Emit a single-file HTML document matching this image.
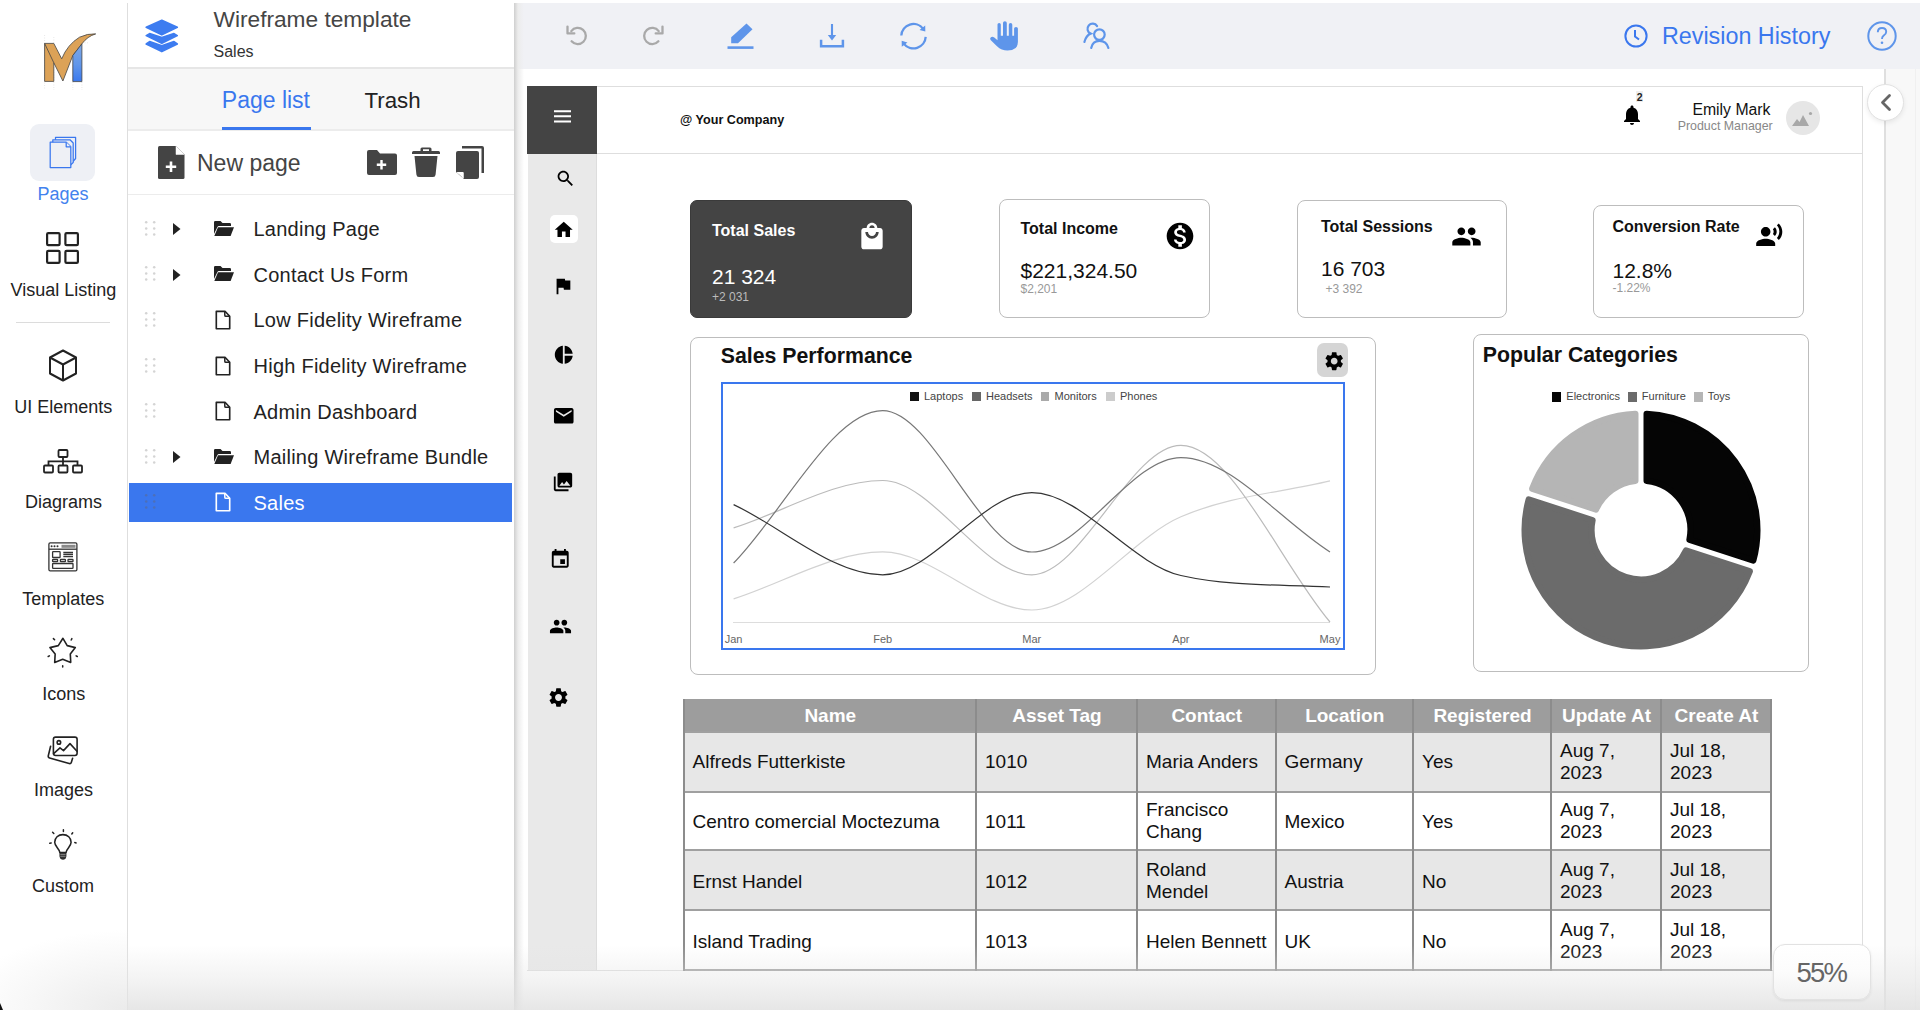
<!DOCTYPE html>
<html><head><meta charset="utf-8"><title>Wireframe</title>
<style>
html,body{margin:0;padding:0;width:1920px;height:1010px;overflow:hidden;background:#fff;}
body{position:relative;font-family:"Liberation Sans",sans-serif;}
.t{position:absolute;line-height:1;white-space:nowrap;}
svg{overflow:visible}
</style></head><body>
<div style="position:absolute;left:1885px;top:69px;width:35px;height:941px;background:#f8f8f8;"></div>
<div style="position:absolute;left:1884px;top:69px;width:2px;height:941px;background:#dfdfdf;"></div>
<div style="position:absolute;left:1915px;top:69px;width:1px;height:941px;background:#f0f0f0;"></div>
<div style="position:absolute;left:514px;top:69px;width:1370px;height:941px;background:#fff;"></div>
<div style="position:absolute;left:514px;top:3px;width:1406px;height:66px;background:#f0f1f5;"></div>
<div style="position:absolute;left:514px;top:3px;width:10px;height:1007px;background:linear-gradient(90deg,#cfcfcf 0,#ececec 40%,rgba(255,255,255,0) 100%);"></div>
<div style="position:absolute;left:127px;top:3px;width:1px;height:1007px;background:#dedede;"></div>
<div style="position:absolute;left:128px;top:68px;width:386px;height:62px;background:#f7f7f7;"></div>
<div style="position:absolute;left:128px;top:67px;width:386px;height:2px;background:#e6e6e6;"></div>
<div style="position:absolute;left:128px;top:129px;width:386px;height:2px;background:#ececec;"></div>
<div style="position:absolute;left:128px;top:194px;width:386px;height:1px;background:#ececec;"></div>
<div class="t" style="left:213.50px;top:8.00px;font-size:22.7px;color:#454545;">Wireframe template</div>
<div class="t" style="left:213.50px;top:44.00px;font-size:16px;color:#333;">Sales</div>
<div class="t" style="left:221.80px;top:89.00px;font-size:23px;color:#3a77ee;">Page list</div>
<div style="position:absolute;left:222px;top:127px;width:89px;height:3px;background:#3a77ee;"></div>
<div class="t" style="left:364.50px;top:90.00px;font-size:22.3px;color:#222;">Trash</div>
<div class="t" style="left:197.00px;top:152.00px;font-size:23px;color:#444;">New page</div>
<div style="position:absolute;left:129px;top:483px;width:383px;height:39px;background:#3a77ee;"></div>
<div class="t" style="left:253.50px;top:219.00px;font-size:20px;color:#222;letter-spacing:0.25px;">Landing Page</div>
<div class="t" style="left:253.50px;top:265.00px;font-size:20px;color:#222;letter-spacing:0.25px;">Contact Us Form</div>
<div class="t" style="left:253.50px;top:310.00px;font-size:20px;color:#222;letter-spacing:0.25px;">Low Fidelity Wireframe</div>
<div class="t" style="left:253.50px;top:356.00px;font-size:20px;color:#222;letter-spacing:0.25px;">High Fidelity Wireframe</div>
<div class="t" style="left:253.50px;top:402.00px;font-size:20px;color:#222;letter-spacing:0.25px;">Admin Dashboard</div>
<div class="t" style="left:253.50px;top:447.00px;font-size:20px;color:#222;letter-spacing:0.25px;">Mailing Wireframe Bundle</div>
<div class="t" style="left:253.50px;top:493.00px;font-size:20px;color:#fff;letter-spacing:0.25px;">Sales</div>
<svg style="position:absolute;left:145px;top:19px;" width="34" height="34" viewBox="0 0 34 34"><g fill="#3d7cf0" stroke="#3d7cf0" stroke-width="1.6" stroke-linejoin="round"><path d="M1.2 8.3 L16.8 1.2 L32.3 8.3 L16.8 15.9 Z"/><path d="M1.2 16.6 L4.6 14.6 L16.8 18.6 L29 14.6 L32.3 16.6 L16.8 24.2 Z"/><path d="M1.2 25 L4.6 22.6 L16.8 26.8 L29 22.6 L32.3 25 L16.8 32.6 Z"/></g></svg>
<svg style="position:absolute;left:158px;top:146px;" width="27" height="33" viewBox="0 0 27 33"><path d="M1.5 0 H18 L26.5 8.5 V31.5 Q26.5 33 25 33 H1.5 Q0 33 0 31.5 V1.5 Q0 0 1.5 0Z" fill="#444"/><path d="M18 0 V8.5 H26.5" fill="#fff" stroke="#fff" stroke-width="0.5"/><path d="M18.5 1.5 L25 8 H18.5Z" fill="#fff"/><path d="M13 15.5 V26 M7.8 20.8 H18.2" stroke="#fff" stroke-width="2.6"/></svg>
<svg style="position:absolute;left:367px;top:150px;" width="30" height="25" viewBox="0 0 30 25"><path d="M0 2 Q0 0 2 0 H10 L13 3.5 H28 Q30 3.5 30 5.5 V23 Q30 25 28 25 H2 Q0 25 0 23Z" fill="#444"/><path d="M14.5 10 V19.5 M9.8 14.8 H19.2" stroke="#fff" stroke-width="2.4"/></svg>
<svg style="position:absolute;left:412px;top:147px;" width="28" height="30" viewBox="0 0 28 30"><path d="M10 0.5 H18 Q19.5 0.5 19.5 2 V4 H26.5 Q28 4 28 5.5 V7 H0 V5.5 Q0 4 1.5 4 H8.5 V2 Q8.5 0.5 10 0.5Z M11 2.3 V4 H17 V2.3Z" fill="#444"/><path d="M2.5 9 H25.5 L23.6 27.5 Q23.4 30 21 30 H7 Q4.6 30 4.4 27.5Z" fill="#444"/></svg>
<svg style="position:absolute;left:456px;top:146px;" width="28" height="33" viewBox="0 0 28 33"><path d="M6 0 H26 Q28 0 28 2 V27 H25.5 V2.5 H6Z" fill="#444"/><path d="M0 7 Q0 5 2 5 H21 Q23 5 23 7 V31 Q23 33 21 33 H8 L0 26Z" fill="#444"/><path d="M0.5 26 H7.5 V32.5" fill="#fff"/><path d="M1 27 H7 V32" fill="none" stroke="#fff" stroke-width="1"/></svg>
<svg style="position:absolute;left:145px;top:221px;" width="11" height="14" viewBox="0 0 11 14"><circle cx="1.2" cy="1.2" r="1.25" fill="#d4d4d4"/><circle cx="9.2" cy="1.2" r="1.25" fill="#d4d4d4"/><circle cx="1.2" cy="7.4" r="1.25" fill="#d4d4d4"/><circle cx="9.2" cy="7.4" r="1.25" fill="#d4d4d4"/><circle cx="1.2" cy="13.6" r="1.25" fill="#d4d4d4"/><circle cx="9.2" cy="13.6" r="1.25" fill="#d4d4d4"/></svg>
<svg style="position:absolute;left:172.7px;top:223px;" width="8" height="12" viewBox="0 0 8 12"><path d="M0 0 L7.5 6 L0 12Z" fill="#222"/></svg>
<svg style="position:absolute;left:213.5px;top:221px;" width="20" height="15" viewBox="0 0 20 15"><path d="M0 1.2 Q0 0 1.2 0 H6.5 L8.5 2 H15.8 Q17 2 17 3.2 V5 H5 Q3.8 5 3.3 6.2 L0 13Z" fill="#222"/><path d="M4 6.3 H20 L16.6 15 H0.3Z" fill="#222"/></svg>
<svg style="position:absolute;left:145px;top:266px;" width="11" height="14" viewBox="0 0 11 14"><circle cx="1.2" cy="1.2" r="1.25" fill="#d4d4d4"/><circle cx="9.2" cy="1.2" r="1.25" fill="#d4d4d4"/><circle cx="1.2" cy="7.4" r="1.25" fill="#d4d4d4"/><circle cx="9.2" cy="7.4" r="1.25" fill="#d4d4d4"/><circle cx="1.2" cy="13.6" r="1.25" fill="#d4d4d4"/><circle cx="9.2" cy="13.6" r="1.25" fill="#d4d4d4"/></svg>
<svg style="position:absolute;left:172.7px;top:269px;" width="8" height="12" viewBox="0 0 8 12"><path d="M0 0 L7.5 6 L0 12Z" fill="#222"/></svg>
<svg style="position:absolute;left:213.5px;top:266px;" width="20" height="15" viewBox="0 0 20 15"><path d="M0 1.2 Q0 0 1.2 0 H6.5 L8.5 2 H15.8 Q17 2 17 3.2 V5 H5 Q3.8 5 3.3 6.2 L0 13Z" fill="#222"/><path d="M4 6.3 H20 L16.6 15 H0.3Z" fill="#222"/></svg>
<svg style="position:absolute;left:145px;top:312px;" width="11" height="14" viewBox="0 0 11 14"><circle cx="1.2" cy="1.2" r="1.25" fill="#d4d4d4"/><circle cx="9.2" cy="1.2" r="1.25" fill="#d4d4d4"/><circle cx="1.2" cy="7.4" r="1.25" fill="#d4d4d4"/><circle cx="9.2" cy="7.4" r="1.25" fill="#d4d4d4"/><circle cx="1.2" cy="13.6" r="1.25" fill="#d4d4d4"/><circle cx="9.2" cy="13.6" r="1.25" fill="#d4d4d4"/></svg>
<svg style="position:absolute;left:215.3px;top:310px;" width="16" height="20" viewBox="0 0 16 20"><path d="M1.3 1.3 H10 L14.7 6.3 V18.7 H1.3Z" fill="none" stroke="#222" stroke-width="1.65" stroke-linejoin="round"/><path d="M9.8 1.3 V5.2 Q9.8 6.3 10.9 6.3 H14.7" fill="none" stroke="#222" stroke-width="1.5"/></svg>
<svg style="position:absolute;left:145px;top:358px;" width="11" height="14" viewBox="0 0 11 14"><circle cx="1.2" cy="1.2" r="1.25" fill="#d4d4d4"/><circle cx="9.2" cy="1.2" r="1.25" fill="#d4d4d4"/><circle cx="1.2" cy="7.4" r="1.25" fill="#d4d4d4"/><circle cx="9.2" cy="7.4" r="1.25" fill="#d4d4d4"/><circle cx="1.2" cy="13.6" r="1.25" fill="#d4d4d4"/><circle cx="9.2" cy="13.6" r="1.25" fill="#d4d4d4"/></svg>
<svg style="position:absolute;left:215.3px;top:356px;" width="16" height="20" viewBox="0 0 16 20"><path d="M1.3 1.3 H10 L14.7 6.3 V18.7 H1.3Z" fill="none" stroke="#222" stroke-width="1.65" stroke-linejoin="round"/><path d="M9.8 1.3 V5.2 Q9.8 6.3 10.9 6.3 H14.7" fill="none" stroke="#222" stroke-width="1.5"/></svg>
<svg style="position:absolute;left:145px;top:403px;" width="11" height="14" viewBox="0 0 11 14"><circle cx="1.2" cy="1.2" r="1.25" fill="#d4d4d4"/><circle cx="9.2" cy="1.2" r="1.25" fill="#d4d4d4"/><circle cx="1.2" cy="7.4" r="1.25" fill="#d4d4d4"/><circle cx="9.2" cy="7.4" r="1.25" fill="#d4d4d4"/><circle cx="1.2" cy="13.6" r="1.25" fill="#d4d4d4"/><circle cx="9.2" cy="13.6" r="1.25" fill="#d4d4d4"/></svg>
<svg style="position:absolute;left:215.3px;top:401px;" width="16" height="20" viewBox="0 0 16 20"><path d="M1.3 1.3 H10 L14.7 6.3 V18.7 H1.3Z" fill="none" stroke="#222" stroke-width="1.65" stroke-linejoin="round"/><path d="M9.8 1.3 V5.2 Q9.8 6.3 10.9 6.3 H14.7" fill="none" stroke="#222" stroke-width="1.5"/></svg>
<svg style="position:absolute;left:145px;top:449px;" width="11" height="14" viewBox="0 0 11 14"><circle cx="1.2" cy="1.2" r="1.25" fill="#d4d4d4"/><circle cx="9.2" cy="1.2" r="1.25" fill="#d4d4d4"/><circle cx="1.2" cy="7.4" r="1.25" fill="#d4d4d4"/><circle cx="9.2" cy="7.4" r="1.25" fill="#d4d4d4"/><circle cx="1.2" cy="13.6" r="1.25" fill="#d4d4d4"/><circle cx="9.2" cy="13.6" r="1.25" fill="#d4d4d4"/></svg>
<svg style="position:absolute;left:172.7px;top:451px;" width="8" height="12" viewBox="0 0 8 12"><path d="M0 0 L7.5 6 L0 12Z" fill="#222"/></svg>
<svg style="position:absolute;left:213.5px;top:449px;" width="20" height="15" viewBox="0 0 20 15"><path d="M0 1.2 Q0 0 1.2 0 H6.5 L8.5 2 H15.8 Q17 2 17 3.2 V5 H5 Q3.8 5 3.3 6.2 L0 13Z" fill="#222"/><path d="M4 6.3 H20 L16.6 15 H0.3Z" fill="#222"/></svg>
<svg style="position:absolute;left:145px;top:494px;" width="11" height="14" viewBox="0 0 11 14"><circle cx="1.2" cy="1.2" r="1.25" fill="#4d6fb8"/><circle cx="9.2" cy="1.2" r="1.25" fill="#4d6fb8"/><circle cx="1.2" cy="7.4" r="1.25" fill="#4d6fb8"/><circle cx="9.2" cy="7.4" r="1.25" fill="#4d6fb8"/><circle cx="1.2" cy="13.6" r="1.25" fill="#4d6fb8"/><circle cx="9.2" cy="13.6" r="1.25" fill="#4d6fb8"/></svg>
<svg style="position:absolute;left:215.3px;top:492px;" width="16" height="20" viewBox="0 0 16 20"><path d="M1.3 1.3 H10 L14.7 6.3 V18.7 H1.3Z" fill="none" stroke="#fff" stroke-width="1.65" stroke-linejoin="round"/><path d="M9.8 1.3 V5.2 Q9.8 6.3 10.9 6.3 H14.7" fill="none" stroke="#fff" stroke-width="1.5"/></svg>
<svg style="position:absolute;left:30px;top:20px;" width="80" height="80" viewBox="30 20 80 80"><defs><linearGradient id="lg1" x1="0" y1="0" x2="0" y2="1"><stop offset="0" stop-color="#7ea8e6"/><stop offset="0.55" stop-color="#6096ea"/><stop offset="1" stop-color="#3a78ee"/></linearGradient></defs><g stroke="#d0d0d0" stroke-width="0.5" stroke-dasharray="1 1.5" fill="none"><path d="M44.6 35 V90 M53.8 37 V90 M72.8 82 V90 M81.9 82 V90 M82 42.8 H89"/></g><path d="M44.6 43.4 H53.8 L61.7 58.8 Q67.5 44.5 79.5 37.2 Q87.5 33.4 95.7 33.9 Q87.5 36.3 81.9 43.8 L72.8 55.5 L62.9 81 L53.8 62.8 V81.4 H44.6 Z" fill="#dca257" stroke="#444" stroke-width="0.8" stroke-linejoin="round"/><path d="M44.6 43.4 L53.8 62.8" stroke="#444" stroke-width="0.8"/><path d="M72.8 55.5 L81.9 43.8 V81.6 H72.8 Z" fill="url(#lg1)" stroke="#444" stroke-width="0.8" stroke-linejoin="round"/></svg>
<div style="position:absolute;left:30px;top:124px;width:65px;height:57px;background:#eef0f5;border-radius:9px;"></div>
<svg style="position:absolute;left:25px;top:115px;" width="80" height="80" viewBox="25 115 80 80"><g fill="#eef0f5" stroke="#3a77ee" stroke-width="1.25" stroke-linejoin="round"><path d="M55.5 137.3 H75.6 V158.5 L73 161.5 H55.5Z"/><path d="M52.8 139.8 H70 L73.2 143 V162.5 L70.5 165 H52.8Z"/><path d="M50.2 142.2 H66.2 L70.8 146.8 V167.5 H50.2Z"/><path d="M66.2 142.2 V146.8 H70.8"/></g></svg>
<div class="t" style="left:37.50px;top:185.00px;font-size:18px;color:#4282ee;">Pages</div>
<svg style="position:absolute;left:46px;top:232px;" width="33" height="32" viewBox="0 0 33 32"><g fill="none" stroke="#222" stroke-width="2.2"><rect x="1.1" y="1.1" width="12.5" height="12" rx="1.2"/><rect x="19.4" y="1.1" width="12.5" height="12" rx="1.2"/><rect x="1.1" y="18.9" width="12.5" height="12" rx="1.2"/><rect x="19.4" y="18.9" width="12.5" height="12" rx="1.2"/></g></svg>
<div class="t" style="left:10.50px;top:281.00px;font-size:18px;color:#222;">Visual Listing</div>
<div style="position:absolute;left:16px;top:322px;width:94px;height:1px;background:#dcdcdc;"></div>
<svg style="position:absolute;left:48px;top:349px;" width="30" height="33" viewBox="0 0 30 33"><g fill="none" stroke="#222" stroke-width="2" stroke-linejoin="round"><path d="M15 1.5 L28 8.5 V24.5 L15 31.5 L2 24.5 V8.5Z"/><path d="M2 8.5 L15 15.5 L28 8.5 M15 15.5 V31.5"/></g></svg>
<div class="t" style="left:14.30px;top:398.00px;font-size:18px;color:#222;">UI Elements</div>
<svg style="position:absolute;left:43px;top:449px;" width="40" height="25" viewBox="0 0 40 25"><g fill="none" stroke="#222" stroke-width="1.8"><rect x="15.5" y="1" width="9" height="7" rx="1"/><rect x="1" y="16.5" width="9" height="7" rx="1"/><rect x="15.5" y="16.5" width="9" height="7" rx="1"/><rect x="30" y="16.5" width="9" height="7" rx="1"/><path d="M20 8 V16.5 M5.5 16.5 V12.3 H34.5 V16.5"/></g></svg>
<div class="t" style="left:25.00px;top:493.00px;font-size:18px;color:#222;">Diagrams</div>
<svg style="position:absolute;left:42px;top:535px;" width="42" height="42" viewBox="42 535 42 42"><g fill="none" stroke="#333" stroke-width="1.3" stroke-linejoin="round"><rect x="48.9" y="542.9" width="28" height="28" rx="1.3"/><path d="M48.9 549.2 H76.9"/><rect x="52.6" y="551.7" width="7.5" height="5.8" rx="0.6"/><path d="M63.3 552.5 H73 M63.3 554.5 H73 M63.3 556.6 H73"/><rect x="52.6" y="559.5" width="5" height="2.2" rx="0.5"/><rect x="60.4" y="559.5" width="5" height="2.2" rx="0.5"/><rect x="68" y="559.5" width="5" height="2.2" rx="0.5"/><rect x="52.6" y="563.5" width="20.4" height="4.8" rx="0.6"/></g><rect x="61.5" y="544.8" width="14" height="3" fill="#8a8a8a"/><g fill="#333"><circle cx="51.6" cy="546.3" r="1"/><circle cx="54.5" cy="546.3" r="1"/><circle cx="57.5" cy="546.3" r="1"/></g></svg>
<div class="t" style="left:22.30px;top:590.00px;font-size:18px;color:#222;">Templates</div>
<svg style="position:absolute;left:40px;top:630px;" width="48" height="45" viewBox="40 630 48 45"><path d="M62.95 638.3 L67.2 645.6 L75.3 647.6 L70.3 654.1 L70.75 662.4 L62.7 659.2 L54.7 662.4 L55.15 654.1 L49.9 647.6 L58.3 645.6Z" fill="none" stroke="#222" stroke-width="1.6" stroke-linejoin="round"/><g stroke="#222" stroke-width="1.5" stroke-linecap="round"><path d="M53.4 638.6 L54.6 639.8 M71.9 638.6 L71.2 640 M48.2 656.5 L49.4 655.8 M77.3 656.5 L76.1 655.8 M62.7 665.7 V666.9"/></g></svg>
<div class="t" style="left:42.20px;top:685.00px;font-size:18px;color:#222;">Icons</div>
<svg style="position:absolute;left:47px;top:735px;" width="32" height="30" viewBox="0 0 32 30"><g fill="none" stroke="#222" stroke-width="1.6" stroke-linejoin="round" stroke-linecap="round"><rect x="6.4" y="2.1" width="23.7" height="18.4" rx="2.2"/><path d="M6.6 18.6 L13 12.9 L16.5 15.6 L23 8.6 L30 16.3"/><circle cx="11.9" cy="7.4" r="1.75"/><path d="M3.6 11.2 L1.3 20.8 Q0.9 22.5 2.6 23 L22.2 28.5 Q23.8 28.9 24.3 27.4 L25.6 23.2"/></g></svg>
<div class="t" style="left:34.00px;top:781.00px;font-size:18px;color:#222;">Images</div>
<svg style="position:absolute;left:49px;top:829px;" width="29" height="31" viewBox="0 0 29 31"><path d="M10.8 23.4 C10.4 19.5 5.7 17.5 5.7 13.3 C5.7 8.9 9.2 5.6 13.9 5.6 C18.6 5.6 22.1 8.9 22.1 13.3 C22.1 17.5 17.5 19.5 17.1 23.4 Z" fill="none" stroke="#222" stroke-width="1.55" stroke-linejoin="round"/><path d="M10.9 23.6 H17 V27.2 Q17 30.3 14 30.3 Q10.9 30.3 10.9 27.2Z" fill="#333" stroke="#222" stroke-width="0.8"/><path d="M11.3 25.4 H16.6 M11.3 27.3 H16.6" stroke="#bbb" stroke-width="0.6"/><g stroke="#222" stroke-width="1.5" stroke-linecap="round"><path d="M14.4 0.8 V2.4 M3.6 3.3 L4.8 4.5 M23.7 3.8 L22.8 5 M0.8 14.3 L2.2 14 M25.8 13.6 L27.1 13.9"/></g></svg>
<div class="t" style="left:32.00px;top:877.00px;font-size:18px;color:#222;">Custom</div>
<svg style="position:absolute;left:565px;top:24px;" width="24" height="23" viewBox="0 0 24 23"><path d="M6.3 7.1 A8.1 8.1 0 1 1 6.6 17.3" fill="none" stroke="#a9a9a9" stroke-width="2.3" stroke-linecap="round"/><path d="M2.5 2.6 V9.4 H9.3" fill="none" stroke="#a9a9a9" stroke-width="2.3" stroke-linecap="round" stroke-linejoin="round"/></svg>
<svg style="position:absolute;left:641px;top:24px;" width="24" height="23" viewBox="0 0 24 23"><path d="M17.7 7.1 A8.1 8.1 0 1 0 17.4 17.3" fill="none" stroke="#a9a9a9" stroke-width="2.3" stroke-linecap="round"/><path d="M21.5 2.6 V9.4 H14.7" fill="none" stroke="#a9a9a9" stroke-width="2.3" stroke-linecap="round" stroke-linejoin="round"/></svg>
<svg style="position:absolute;left:727px;top:23px;" width="27" height="26" viewBox="0 0 27 26"><path d="M19.5 0.5 L25.5 6.2 L11 20.2 H4.2 L4.2 14.2Z" fill="#5e95ea"/><rect x="0.5" y="23.3" width="26" height="2.6" fill="#5e95ea"/></svg>
<svg style="position:absolute;left:819px;top:24px;" width="26" height="24" viewBox="0 0 26 24"><path d="M13 0 V12" stroke="#5e95ea" stroke-width="2.1"/><path d="M8.8 11 H17.2 L13 16.6Z" fill="#5e95ea"/><path d="M2.1 15.8 V22.3 H23.9 V15.8" fill="none" stroke="#5e95ea" stroke-width="2.5"/></svg>
<svg style="position:absolute;left:893px;top:16px;" width="40" height="40" viewBox="893 16 40 40"><path d="M901.32 35.56 A12.2 12.2 0 0 1 923.11 28.69" fill="none" stroke="#5e95ea" stroke-width="2.3"/><path d="M925.68 36.84 A12.2 12.2 0 0 1 903.89 43.71" fill="none" stroke="#5e95ea" stroke-width="2.3"/><path d="M925.33 31.53 L925.21 25.53 L919.54 29.96Z M901.67 40.87 L901.79 46.87 L907.46 42.44Z" fill="#5e95ea"/></svg>
<svg style="position:absolute;left:985px;top:16px;" width="40" height="40" viewBox="985 16 40 40"><path d="M997.5 24.6 Q997.5 23 999.15 23 Q1000.8 23 1000.8 24.6 V35.8 H1003 V22.9 Q1003 21.2 1004.9 21.2 Q1006.8 21.2 1006.8 22.9 V35.8 H1008.8 V24.7 Q1008.8 23 1010.55 23 Q1012.3 23 1012.3 24.7 V35.8 H1014.1 V28.6 Q1014.1 26.9 1016 26.9 Q1017.9 26.9 1017.9 28.6 V42 Q1017.9 50.6 1007.5 50.6 Q1001.5 50.6 997 46.2 L990.6 39.9 Q989.5 38.4 990.9 37.3 Q992.4 36.3 994.3 37.6 L997.5 40.3 Z" fill="#5e95ea"/></svg>
<svg style="position:absolute;left:1083px;top:22px;" width="27" height="27" viewBox="0 0 27 27"><g fill="none" stroke="#5e95ea" stroke-width="2.2" stroke-linecap="round"><circle cx="16.4" cy="12.6" r="5.3"/><path d="M8.2 26 Q9.7 18.9 16.4 18.9 Q23.5 18.9 25.4 26"/><path d="M14.1 4.1 A5.2 5.2 0 1 0 7.6 11.6 Q3.2 13.3 1.4 20"/></g></svg>
<svg style="position:absolute;left:1624px;top:24px;" width="24" height="24" viewBox="0 0 24 24"><circle cx="12" cy="12" r="10.6" fill="none" stroke="#3a77ee" stroke-width="2"/><path d="M11 6 V12.5 L15 15.5" fill="none" stroke="#3a77ee" stroke-width="2"/></svg>
<div class="t" style="left:1662.00px;top:25.00px;font-size:23.3px;color:#3a77ee;">Revision History</div>
<svg style="position:absolute;left:1867px;top:21px;" width="30" height="30" viewBox="0 0 30 30"><circle cx="15" cy="15" r="13.7" fill="none" stroke="#5e95ea" stroke-width="2"/><path d="M10.8 11.3 Q10.8 7 15 7 Q19.2 7 19.2 10.8 Q19.2 13.2 16.6 14.6 Q15 15.5 15 18" fill="none" stroke="#5e95ea" stroke-width="1.9"/><circle cx="15" cy="21.8" r="1.3" fill="#5e95ea"/></svg>
<div style="position:absolute;left:527px;top:86px;width:1336px;height:1px;background:#dedede;"></div>
<div style="position:absolute;left:1862px;top:86px;width:1px;height:885px;background:#dedede;"></div>
<div style="position:absolute;left:597px;top:153px;width:1265px;height:1px;background:#dedede;"></div>
<div style="position:absolute;left:527px;top:970px;width:1336px;height:1px;background:#dedede;"></div>
<div style="position:absolute;left:527px;top:86px;width:70px;height:68px;background:#444;"></div>
<svg style="position:absolute;left:554px;top:110px;" width="17" height="13" viewBox="0 0 17 13"><path d="M0 1.2 H17 M0 6.3 H17 M0 11.4 H17" stroke="#fff" stroke-width="2"/></svg>
<div style="position:absolute;left:528px;top:154px;width:69px;height:816px;background:#e9e9e9;"></div>
<div style="position:absolute;left:596px;top:154px;width:1px;height:816px;background:#dddddd;"></div>
<div style="position:absolute;left:550px;top:215px;width:28px;height:28px;background:#fff;border-radius:5px;"></div>
<svg style="position:absolute;left:554.8px;top:168.4px;" width="21" height="21" viewBox="0 0 24 24"><path d="M15.5 14h-.79l-.28-.27C15.41 12.59 16 11.11 16 9.5 16 5.91 13.09 3 9.5 3S3 5.91 3 9.5 5.91 16 9.5 16c1.61 0 3.09-.59 4.23-1.57l.27.28v.79l5 4.99L20.49 19l-4.99-5zm-6 0C7.01 14 5 11.99 5 9.5S7.01 5 9.5 5 14 7.01 14 9.5 11.99 14 9.5 14z" fill="#000"/></svg>
<svg style="position:absolute;left:552.9px;top:219.1px;" width="21.5" height="21.5" viewBox="0 0 24 24"><path d="M10 20v-6h4v6h5v-8h3L12 3 2 12h3v8z" fill="#000"/></svg>
<svg style="position:absolute;left:551.6px;top:275.2px;" width="22" height="22" viewBox="0 0 24 24"><path d="M14.4 6L14 4H5v17h2v-7h5.6l.4 2h7V6z" fill="#000"/></svg>
<svg style="position:absolute;left:552.9px;top:344px;" width="21.5" height="21.5" viewBox="0 0 24 24"><path d="M11 2v20c-5.07-.5-9-4.79-9-10s3.93-9.5 9-10zm2.03 0v8.99H22c-.47-4.74-4.24-8.52-8.97-8.99zm0 11.01V22c4.74-.47 8.5-4.25 8.97-8.99h-8.97z" fill="#000"/></svg>
<svg style="position:absolute;left:552px;top:404.2px;" width="23.5" height="23.5" viewBox="0 0 24 24"><path d="M20 4H4c-1.1 0-1.99.9-1.99 2L2 18c0 1.1.9 2 2 2h16c1.1 0 2-.9 2-2V6c0-1.1-.9-2-2-2zm0 4l-8 5-8-5V6l8 5 8-5v2z" fill="#000"/></svg>
<svg style="position:absolute;left:551.5px;top:471.2px;" width="22" height="22" viewBox="0 0 24 24"><path d="M22 16V4c0-1.1-.9-2-2-2H8c-1.1 0-2 .9-2 2v12c0 1.1.9 2 2 2h12c1.1 0 2-.9 2-2zm-11-4l2.03 2.71L16 11l4 5H8l3-4zM2 6v14c0 1.1.9 2 2 2h14v-2H4V6H2z" fill="#000"/></svg>
<svg style="position:absolute;left:549.2px;top:547.8px;" width="22.5" height="22.5" viewBox="0 0 24 24"><path d="M17 12h-5v5h5v-5zM16 1v2H8V1H6v2H5c-1.11 0-1.99.9-1.99 2L3 19c0 1.1.89 2 2 2h14c1.1 0 2-.9 2-2V5c0-1.1-.9-2-2-2h-1V1h-2zm3 18H5V8h14v11z" fill="#000"/></svg>
<svg style="position:absolute;left:549px;top:615.2px;" width="23" height="23" viewBox="0 0 24 24"><path d="M16 11c1.66 0 2.99-1.34 2.99-3S17.66 5 16 5c-1.66 0-3 1.34-3 3s1.34 3 3 3zm-8 0c1.66 0 2.99-1.34 2.99-3S9.66 5 8 5C6.34 5 5 6.34 5 8s1.34 3 3 3zm0 2c-2.33 0-7 1.17-7 3.5V19h14v-2.5c0-2.33-4.67-3.5-7-3.5zm8 0c-.29 0-.62.02-.97.05 1.16.84 1.97 1.97 1.97 3.45V19h6v-2.5c0-2.33-4.67-3.5-7-3.5z" fill="#000"/></svg>
<svg style="position:absolute;left:547.4px;top:686.1px;" width="23" height="23" viewBox="0 0 24 24"><path d="M19.14 12.94c.04-.3.06-.61.06-.94 0-.32-.02-.64-.07-.94l2.03-1.58c.18-.14.23-.41.12-.61l-1.92-3.32c-.12-.22-.37-.29-.59-.22l-2.39.96c-.5-.38-1.03-.7-1.62-.94l-.36-2.54c-.04-.24-.24-.41-.48-.41h-3.84c-.24 0-.43.17-.47.41l-.36 2.54c-.59.24-1.13.57-1.62.94l-2.39-.96c-.22-.08-.47 0-.59.22L2.74 8.87c-.12.21-.08.47.12.61l2.03 1.58c-.05.3-.09.63-.09.94s.02.64.07.94l-2.03 1.58c-.18.14-.23.41-.12.61l1.92 3.32c.12.22.37.29.59.22l2.39-.96c.5.38 1.03.7 1.62.94l.36 2.54c.05.24.24.41.48.41h3.84c.24 0 .44-.17.47-.41l.36-2.54c.59-.24 1.13-.56 1.62-.94l2.39.96c.22.08.47 0 .59-.22l1.92-3.32c.12-.22.07-.47-.12-.61l-2.01-1.58zM12 15.6c-1.98 0-3.6-1.62-3.6-3.6s1.62-3.6 3.6-3.6 3.6 1.62 3.6 3.6-1.62 3.6-3.6 3.6z" fill="#000"/></svg>
<div class="t" style="left:680.00px;top:114.00px;font-size:12.6px;color:#111;font-weight:700;">@ Your Company</div>
<svg style="position:absolute;left:1620px;top:102.5px;" width="24" height="24" viewBox="0 0 24 24"><path d="M12 22c1.1 0 2-.9 2-2h-4c0 1.1.89 2 2 2zm6-6v-5c0-3.07-1.64-5.64-4.5-6.32V4c0-.83-.67-1.5-1.5-1.5s-1.5.67-1.5 1.5v.68C7.63 5.36 6 7.92 6 11v5l-2 2v1h16v-1l-2-2z" fill="#000"/></svg>
<div style="position:absolute;left:1636px;top:91px;width:7px;height:11px;background:#eeeeee;"></div>
<div class="t" style="left:1636.80px;top:92.00px;font-size:10.5px;color:#222;font-weight:700;">2</div>
<div class="t" style="right:149.50px;top:102.00px;font-size:15.8px;color:#111;">Emily Mark</div>
<div class="t" style="right:147.30px;top:120.00px;font-size:12.4px;color:#888;">Product Manager</div>
<div style="position:absolute;left:1786px;top:101px;width:34px;height:34px;background:#e6e6e6;border-radius:50%;"></div>
<svg style="position:absolute;left:1792px;top:110px;" width="22" height="16" viewBox="0 0 22 16"><path d="M0 16 L5 9 L7.5 12 L11 5 L17 16Z" fill="#a8a8a8"/><circle cx="18.5" cy="3.5" r="1.6" fill="#a8a8a8"/></svg>
<div style="position:absolute;left:690px;top:200px;width:222px;height:118px;background:#444;border-radius:7px;box-sizing:border-box;border:1px solid #3a3a3a;"></div>
<div class="t" style="left:712.00px;top:223.00px;font-size:16px;color:#fff;font-weight:700;">Total Sales</div>
<svg style="position:absolute;left:856px;top:220px;" width="32" height="32" viewBox="0 0 24 24"><path d="M18 6h-2c0-2.21-1.79-4-4-4S8 3.79 8 6H6c-1.1 0-2 .9-2 2v12c0 1.1.9 2 2 2h12c1.1 0 2-.9 2-2V8c0-1.1-.9-2-2-2zm-6-2c1.1 0 2 .9 2 2h-4c0-1.1.9-2 2-2zm0 10c-2.76 0-5-2.24-5-5h2c0 1.66 1.34 3 3 3s3-1.34 3-3h2c0 2.76-2.24 5-5 5z" fill="#fff"/></svg>
<div class="t" style="left:712.00px;top:266.00px;font-size:21px;color:#fff;">21 324</div>
<div class="t" style="left:712.00px;top:291.00px;font-size:12px;color:#bbb;">+2 031</div>
<div style="position:absolute;left:999px;top:199px;width:211px;height:119px;background:#fff;border:1px solid #bdbdbd;border-radius:8px;box-sizing:border-box;"></div>
<div class="t" style="left:1020.50px;top:221.00px;font-size:16px;color:#111;font-weight:700;">Total Income</div>
<svg style="position:absolute;left:1164px;top:220px;" width="32" height="32" viewBox="0 0 24 24"><path d="M12 2C6.48 2 2 6.48 2 12s4.48 10 10 10 10-4.48 10-10S17.52 2 12 2zm1.41 16.09V20h-2.67v-1.93c-1.71-.36-3.16-1.46-3.27-3.4h1.96c.1 1.05.82 1.87 2.65 1.87 1.96 0 2.4-.98 2.4-1.59 0-.83-.44-1.61-2.67-2.14-2.48-.6-4.18-1.62-4.18-3.67 0-1.72 1.39-2.84 3.11-3.21V4h2.67v1.95c1.86.45 2.79 1.86 2.85 3.39H14.3c-.05-1.11-.64-1.87-2.22-1.87-1.5 0-2.4.68-2.4 1.64 0 .84.65 1.39 2.67 1.910s4.18 1.39 4.18 3.91c-.01 1.83-1.38 2.83-3.12 3.16z" fill="#000"/></svg>
<div class="t" style="left:1020.50px;top:260.00px;font-size:21px;color:#111;">$221,324.50</div>
<div class="t" style="left:1020.50px;top:283.00px;font-size:12px;color:#999;">$2,201</div>
<div style="position:absolute;left:1297px;top:200px;width:210px;height:118px;background:#fff;border:1px solid #bdbdbd;border-radius:8px;box-sizing:border-box;"></div>
<div class="t" style="left:1321.00px;top:219.00px;font-size:16px;color:#111;font-weight:700;">Total Sessions</div>
<svg style="position:absolute;left:1451px;top:221px;" width="31" height="31" viewBox="0 0 24 24"><path d="M16 11c1.66 0 2.99-1.34 2.99-3S17.66 5 16 5c-1.66 0-3 1.34-3 3s1.34 3 3 3zm-8 0c1.66 0 2.99-1.34 2.99-3S9.66 5 8 5C6.34 5 5 6.34 5 8s1.34 3 3 3zm0 2c-2.33 0-7 1.17-7 3.5V19h14v-2.5c0-2.33-4.67-3.5-7-3.5zm8 0c-.29 0-.62.02-.97.05 1.16.84 1.97 1.97 1.97 3.45V19h6v-2.5c0-2.33-4.67-3.5-7-3.5z" fill="#000"/></svg>
<div class="t" style="left:1321.00px;top:258.00px;font-size:21px;color:#111;">16 703</div>
<div class="t" style="left:1325.50px;top:283.00px;font-size:12px;color:#999;">+3 392</div>
<div style="position:absolute;left:1593px;top:205px;width:211px;height:113px;background:#fff;border:1px solid #bdbdbd;border-radius:8px;box-sizing:border-box;"></div>
<div class="t" style="left:1612.50px;top:219.00px;font-size:16px;color:#111;font-weight:700;">Conversion Rate</div>
<svg style="position:absolute;left:1754.5px;top:221px;" width="28.5" height="28.5" viewBox="0 0 24 24"><path d="M9 13c2.21 0 4-1.79 4-4s-1.79-4-4-4-4 1.79-4 4 1.79 4 4 4zm0 2c-2.67 0-8 1.34-8 4v2h16v-2c0-2.66-5.33-4-8-4zm7.76-9.64l-1.68 1.69c.84 1.18.84 2.71 0 3.89l1.68 1.69c2.02-2.02 2.02-5.07 0-7.270zM20.07 2l-1.63 1.63c2.77 3.02 2.77 7.56 0 10.74L20.07 16c3.9-3.89 3.91-9.95 0-14z" fill="#000"/></svg>
<div class="t" style="left:1612.50px;top:260.00px;font-size:21px;color:#111;">12.8%</div>
<div class="t" style="left:1612.50px;top:282.00px;font-size:12px;color:#999;">-1.22%</div>
<div style="position:absolute;left:690px;top:337px;width:686px;height:338px;background:#fff;border:1px solid #bdbdbd;border-radius:8px;box-sizing:border-box;"></div>
<div class="t" style="left:720.70px;top:346.00px;font-size:21.3px;color:#111;font-weight:700;">Sales Performance</div>
<div style="position:absolute;left:1317px;top:343px;width:31px;height:34px;background:#d5d5d5;border-radius:7px;"></div>
<svg style="position:absolute;left:1322.8px;top:349.7px;" width="22.4" height="22.4" viewBox="0 0 24 24"><path d="M19.14 12.94c.04-.3.06-.61.06-.94 0-.32-.02-.64-.07-.94l2.03-1.58c.18-.14.23-.41.12-.61l-1.92-3.32c-.12-.22-.37-.29-.59-.22l-2.39.96c-.5-.38-1.03-.7-1.62-.94l-.36-2.54c-.04-.24-.24-.41-.48-.41h-3.84c-.24 0-.43.17-.47.41l-.36 2.54c-.59.24-1.13.57-1.62.94l-2.39-.96c-.22-.08-.47 0-.59.22L2.74 8.87c-.12.21-.08.47.12.61l2.03 1.58c-.05.3-.09.63-.09.94s.02.64.07.94l-2.03 1.58c-.18.14-.23.41-.12.61l1.92 3.32c.12.22.37.29.59.22l2.39-.96c.5.38 1.03.7 1.62.94l.36 2.54c.05.24.24.41.48.41h3.84c.24 0 .44-.17.47-.41l.36-2.54c.59-.24 1.13-.56 1.62-.94l2.39.96c.22.08.47 0 .59-.22l1.92-3.32c.12-.22.07-.47-.12-.61l-2.01-1.58zM12 15.6c-1.98 0-3.6-1.62-3.6-3.6s1.62-3.6 3.6-3.6 3.6 1.62 3.6 3.6-1.62 3.6-3.6 3.6z" fill="#000"/></svg>
<div style="position:absolute;left:721px;top:382px;width:624px;height:268px;box-sizing:border-box;border:2px solid #3a77ee;"></div>
<div style="position:absolute;left:910px;top:392px;width:8.5px;height:9px;background:#111;"></div>
<div class="t" style="left:924.00px;top:391.00px;font-size:11px;color:#444;">Laptops</div>
<div style="position:absolute;left:972px;top:392px;width:8.5px;height:9px;background:#666;"></div>
<div class="t" style="left:986.00px;top:391.00px;font-size:11px;color:#444;">Headsets</div>
<div style="position:absolute;left:1040.6px;top:392px;width:8.5px;height:9px;background:#aaa;"></div>
<div class="t" style="left:1054.60px;top:391.00px;font-size:11px;color:#444;">Monitors</div>
<div style="position:absolute;left:1106px;top:392px;width:8.5px;height:9px;background:#ccc;"></div>
<div class="t" style="left:1120.00px;top:391.00px;font-size:11px;color:#444;">Phones</div>
<div style="position:absolute;left:733px;top:622px;width:597px;height:1px;background:#ddd;"></div>
<div class="t" style="left:233.60px;width:1000px;text-align:center;top:634.00px;font-size:11px;color:#666;">Jan</div>
<div class="t" style="left:382.70px;width:1000px;text-align:center;top:634.00px;font-size:11px;color:#666;">Feb</div>
<div class="t" style="left:531.80px;width:1000px;text-align:center;top:634.00px;font-size:11px;color:#666;">Mar</div>
<div class="t" style="left:680.90px;width:1000px;text-align:center;top:634.00px;font-size:11px;color:#666;">Apr</div>
<div class="t" style="left:830.00px;width:1000px;text-align:center;top:634.00px;font-size:11px;color:#666;">May</div>
<svg style="position:absolute;left:0px;top:0px;pointer-events:none;" width="1920" height="1010" viewBox="0 0 1920 1010"><path d="M733.6 598.9 C783.3 583.2 833.0 551.9 882.7 551.9 C932.4 551.9 982.1 610.0 1031.8 610.0 C1081.5 610.0 1131.2 538.3 1180.9 516.8 C1230.6 495.3 1280.3 492.9 1330.0 480.9" fill="none" stroke="#d2d2d2" stroke-width="1.2"/><path d="M733.6 527.9 C783.3 512.1 833.0 480.5 882.7 480.5 C932.4 480.5 982.1 574.8 1031.8 574.8 C1081.5 574.8 1131.2 445.4 1180.9 445.4 C1230.6 445.4 1280.3 563.1 1330.0 622.0" fill="none" stroke="#bbb" stroke-width="1.2"/><path d="M733.6 563.0 C783.3 512.2 833.0 410.6 882.7 410.6 C932.4 410.6 982.1 552.0 1031.8 552.0 C1081.5 552.0 1131.2 457.6 1180.9 457.6 C1230.6 457.6 1280.3 520.5 1330.0 552.0" fill="none" stroke="#777" stroke-width="1.2"/><path d="M733.6 504.6 C783.3 528.0 833.0 574.8 882.7 574.8 C932.4 574.8 982.1 492.7 1031.8 492.7 C1081.5 492.7 1131.2 564.3 1180.9 575.5 C1230.6 586.7 1280.3 584.3 1330.0 587.0" fill="none" stroke="#333" stroke-width="1.2"/></svg>
<div style="position:absolute;left:1473px;top:334px;width:336px;height:338px;background:#fff;border:1px solid #bdbdbd;border-radius:8px;box-sizing:border-box;"></div>
<div class="t" style="left:1482.70px;top:345.00px;font-size:21.3px;color:#111;font-weight:700;">Popular Categories</div>
<div style="position:absolute;left:1552.3px;top:392px;width:9px;height:9.5px;background:#050505;"></div>
<div class="t" style="left:1566.30px;top:391.00px;font-size:11px;color:#444;">Electronics</div>
<div style="position:absolute;left:1627.8px;top:392px;width:9px;height:9.5px;background:#6b6b6b;"></div>
<div class="t" style="left:1641.80px;top:391.00px;font-size:11px;color:#444;">Furniture</div>
<div style="position:absolute;left:1693.7px;top:392px;width:9px;height:9.5px;background:#b5b5b5;"></div>
<div class="t" style="left:1707.70px;top:391.00px;font-size:11px;color:#444;">Toys</div>
<svg style="position:absolute;left:0px;top:0px;pointer-events:none;" width="1920" height="1010" viewBox="0 0 1920 1010"><path d="M1646.70 413.84 A116.3 116.3 0 0 1 1753.24 560.47 L1689.53 539.77 A49.5 49.5 0 0 0 1646.70 480.83Z" fill="#050505" stroke="#050505" stroke-width="6.4" stroke-linejoin="round"/><path d="M1749.71 571.32 A116.3 116.3 0 0 1 1528.76 499.53 L1592.47 520.23 A49.5 49.5 0 0 0 1686.00 550.62Z" fill="#6b6b6b" stroke="#6b6b6b" stroke-width="6.4" stroke-linejoin="round"/><path d="M1532.29 488.68 A116.3 116.3 0 0 1 1635.30 413.84 L1635.30 480.83 A49.5 49.5 0 0 0 1596.00 509.38Z" fill="#b5b5b5" stroke="#b5b5b5" stroke-width="6.4" stroke-linejoin="round"/></svg>
<div style="position:absolute;left:684px;top:699px;width:1088px;height:33.5px;background:#9d9d9d;"></div>
<div style="position:absolute;left:684px;top:732.5px;width:1088px;height:59px;background:#e7e7e7;"></div>
<div style="position:absolute;left:684px;top:850.5px;width:1088px;height:59.5px;background:#e7e7e7;"></div>
<div style="position:absolute;left:684px;top:731px;width:1088px;height:2px;background:#a0a0a0;"></div>
<div style="position:absolute;left:684px;top:791px;width:1088px;height:2px;background:#a0a0a0;"></div>
<div style="position:absolute;left:684px;top:849px;width:1088px;height:2px;background:#a0a0a0;"></div>
<div style="position:absolute;left:684px;top:909px;width:1088px;height:2px;background:#a0a0a0;"></div>
<div style="position:absolute;left:684px;top:969px;width:1088px;height:2px;background:#a0a0a0;"></div>
<div style="position:absolute;left:683px;top:699px;width:2px;height:272px;background:#8c8c8c;"></div>
<div style="position:absolute;left:975px;top:699px;width:2px;height:272px;background:#8c8c8c;"></div>
<div style="position:absolute;left:1136px;top:699px;width:2px;height:272px;background:#8c8c8c;"></div>
<div style="position:absolute;left:1275px;top:699px;width:2px;height:272px;background:#8c8c8c;"></div>
<div style="position:absolute;left:1412px;top:699px;width:2px;height:272px;background:#8c8c8c;"></div>
<div style="position:absolute;left:1550px;top:699px;width:2px;height:272px;background:#8c8c8c;"></div>
<div style="position:absolute;left:1660px;top:699px;width:2px;height:272px;background:#8c8c8c;"></div>
<div style="position:absolute;left:1770px;top:699px;width:2px;height:272px;background:#8c8c8c;"></div>
<div class="t" style="left:330.25px;width:1000px;text-align:center;top:706.00px;font-size:19px;color:#fff;font-weight:700;">Name</div>
<div class="t" style="left:557.00px;width:1000px;text-align:center;top:706.00px;font-size:19px;color:#fff;font-weight:700;">Asset Tag</div>
<div class="t" style="left:706.75px;width:1000px;text-align:center;top:706.00px;font-size:19px;color:#fff;font-weight:700;">Contact</div>
<div class="t" style="left:844.75px;width:1000px;text-align:center;top:706.00px;font-size:19px;color:#fff;font-weight:700;">Location</div>
<div class="t" style="left:982.50px;width:1000px;text-align:center;top:706.00px;font-size:19px;color:#fff;font-weight:700;">Registered</div>
<div class="t" style="left:1106.50px;width:1000px;text-align:center;top:706.00px;font-size:19px;color:#fff;font-weight:700;">Update At</div>
<div class="t" style="left:1216.50px;width:1000px;text-align:center;top:706.00px;font-size:19px;color:#fff;font-weight:700;">Create At</div>
<div class="t" style="left:692.50px;top:752.00px;font-size:19px;color:#111;">Alfreds Futterkiste</div>
<div class="t" style="left:985.00px;top:752.00px;font-size:19px;color:#111;">1010</div>
<div class="t" style="left:1146.00px;top:752.00px;font-size:19px;color:#111;">Maria Anders</div>
<div class="t" style="left:1284.50px;top:752.00px;font-size:19px;color:#111;">Germany</div>
<div class="t" style="left:1422.00px;top:752.00px;font-size:19px;color:#111;">Yes</div>
<div class="t" style="left:1560.00px;top:741.00px;font-size:19px;color:#111;">Aug 7,</div>
<div class="t" style="left:1560.00px;top:763.00px;font-size:19px;color:#111;">2023</div>
<div class="t" style="left:1670.00px;top:741.00px;font-size:19px;color:#111;">Jul 18,</div>
<div class="t" style="left:1670.00px;top:763.00px;font-size:19px;color:#111;">2023</div>
<div class="t" style="left:692.50px;top:812.00px;font-size:19px;color:#111;">Centro comercial Moctezuma</div>
<div class="t" style="left:985.00px;top:812.00px;font-size:19px;color:#111;">1011</div>
<div class="t" style="left:1146.00px;top:800.00px;font-size:19px;color:#111;">Francisco</div>
<div class="t" style="left:1146.00px;top:822.00px;font-size:19px;color:#111;">Chang</div>
<div class="t" style="left:1284.50px;top:812.00px;font-size:19px;color:#111;">Mexico</div>
<div class="t" style="left:1422.00px;top:812.00px;font-size:19px;color:#111;">Yes</div>
<div class="t" style="left:1560.00px;top:800.00px;font-size:19px;color:#111;">Aug 7,</div>
<div class="t" style="left:1560.00px;top:822.00px;font-size:19px;color:#111;">2023</div>
<div class="t" style="left:1670.00px;top:800.00px;font-size:19px;color:#111;">Jul 18,</div>
<div class="t" style="left:1670.00px;top:822.00px;font-size:19px;color:#111;">2023</div>
<div class="t" style="left:692.50px;top:872.00px;font-size:19px;color:#111;">Ernst Handel</div>
<div class="t" style="left:985.00px;top:872.00px;font-size:19px;color:#111;">1012</div>
<div class="t" style="left:1146.00px;top:860.00px;font-size:19px;color:#111;">Roland</div>
<div class="t" style="left:1146.00px;top:882.00px;font-size:19px;color:#111;">Mendel</div>
<div class="t" style="left:1284.50px;top:872.00px;font-size:19px;color:#111;">Austria</div>
<div class="t" style="left:1422.00px;top:872.00px;font-size:19px;color:#111;">No</div>
<div class="t" style="left:1560.00px;top:860.00px;font-size:19px;color:#111;">Aug 7,</div>
<div class="t" style="left:1560.00px;top:882.00px;font-size:19px;color:#111;">2023</div>
<div class="t" style="left:1670.00px;top:860.00px;font-size:19px;color:#111;">Jul 18,</div>
<div class="t" style="left:1670.00px;top:882.00px;font-size:19px;color:#111;">2023</div>
<div class="t" style="left:692.50px;top:932.00px;font-size:19px;color:#111;">Island Trading</div>
<div class="t" style="left:985.00px;top:932.00px;font-size:19px;color:#111;">1013</div>
<div class="t" style="left:1146.00px;top:932.00px;font-size:19px;color:#111;">Helen Bennett</div>
<div class="t" style="left:1284.50px;top:932.00px;font-size:19px;color:#111;">UK</div>
<div class="t" style="left:1422.00px;top:932.00px;font-size:19px;color:#111;">No</div>
<div class="t" style="left:1560.00px;top:920.00px;font-size:19px;color:#111;">Aug 7,</div>
<div class="t" style="left:1560.00px;top:942.00px;font-size:19px;color:#111;">2023</div>
<div class="t" style="left:1670.00px;top:920.00px;font-size:19px;color:#111;">Jul 18,</div>
<div class="t" style="left:1670.00px;top:942.00px;font-size:19px;color:#111;">2023</div>
<div style="position:absolute;left:128px;top:945px;width:1792px;height:65px;background:linear-gradient(180deg,rgba(230,230,230,0) 0%,rgba(228,228,228,0.45) 55%,rgba(226,226,226,0.85) 100%);pointer-events:none;"></div>
<div style="position:absolute;left:0px;top:930px;width:128px;height:80px;background:radial-gradient(ellipse 170px 80px at 128px 80px,rgba(228,228,228,0.75) 0%,rgba(230,230,230,0.3) 60%,rgba(230,230,230,0) 100%);pointer-events:none;"></div>
<div style="position:absolute;left:1773px;top:944px;width:98px;height:56px;background:linear-gradient(180deg,#fff 0%,#fcfcfc 50%,#f1f1f1 100%);border:1px solid #e2e2e2;border-radius:12px;box-sizing:border-box;box-shadow:0 1px 3px rgba(0,0,0,0.07);"></div>
<div class="t" style="left:1796.50px;top:959.00px;font-size:27.5px;color:#666;letter-spacing:-1.8px;">55%</div>
<div style="position:absolute;left:1867px;top:84px;width:37px;height:37px;background:#fff;border:1px solid #e2e2e2;border-radius:50%;box-sizing:border-box;box-shadow:0 2px 5px rgba(0,0,0,0.08);"></div>
<svg style="position:absolute;left:1879px;top:93px;" width="14" height="19" viewBox="0 0 14 19"><path d="M10.5 2.5 L3.5 9.5 L10.5 16.5" fill="none" stroke="#666" stroke-width="2.8" stroke-linecap="round" stroke-linejoin="round"/></svg>
<svg style="position:absolute;left:0px;top:1000px;" width="4" height="10" viewBox="0 0 4 10"><path d="M0 3 L3 10 H0Z" fill="#111"/></svg>
</body></html>
